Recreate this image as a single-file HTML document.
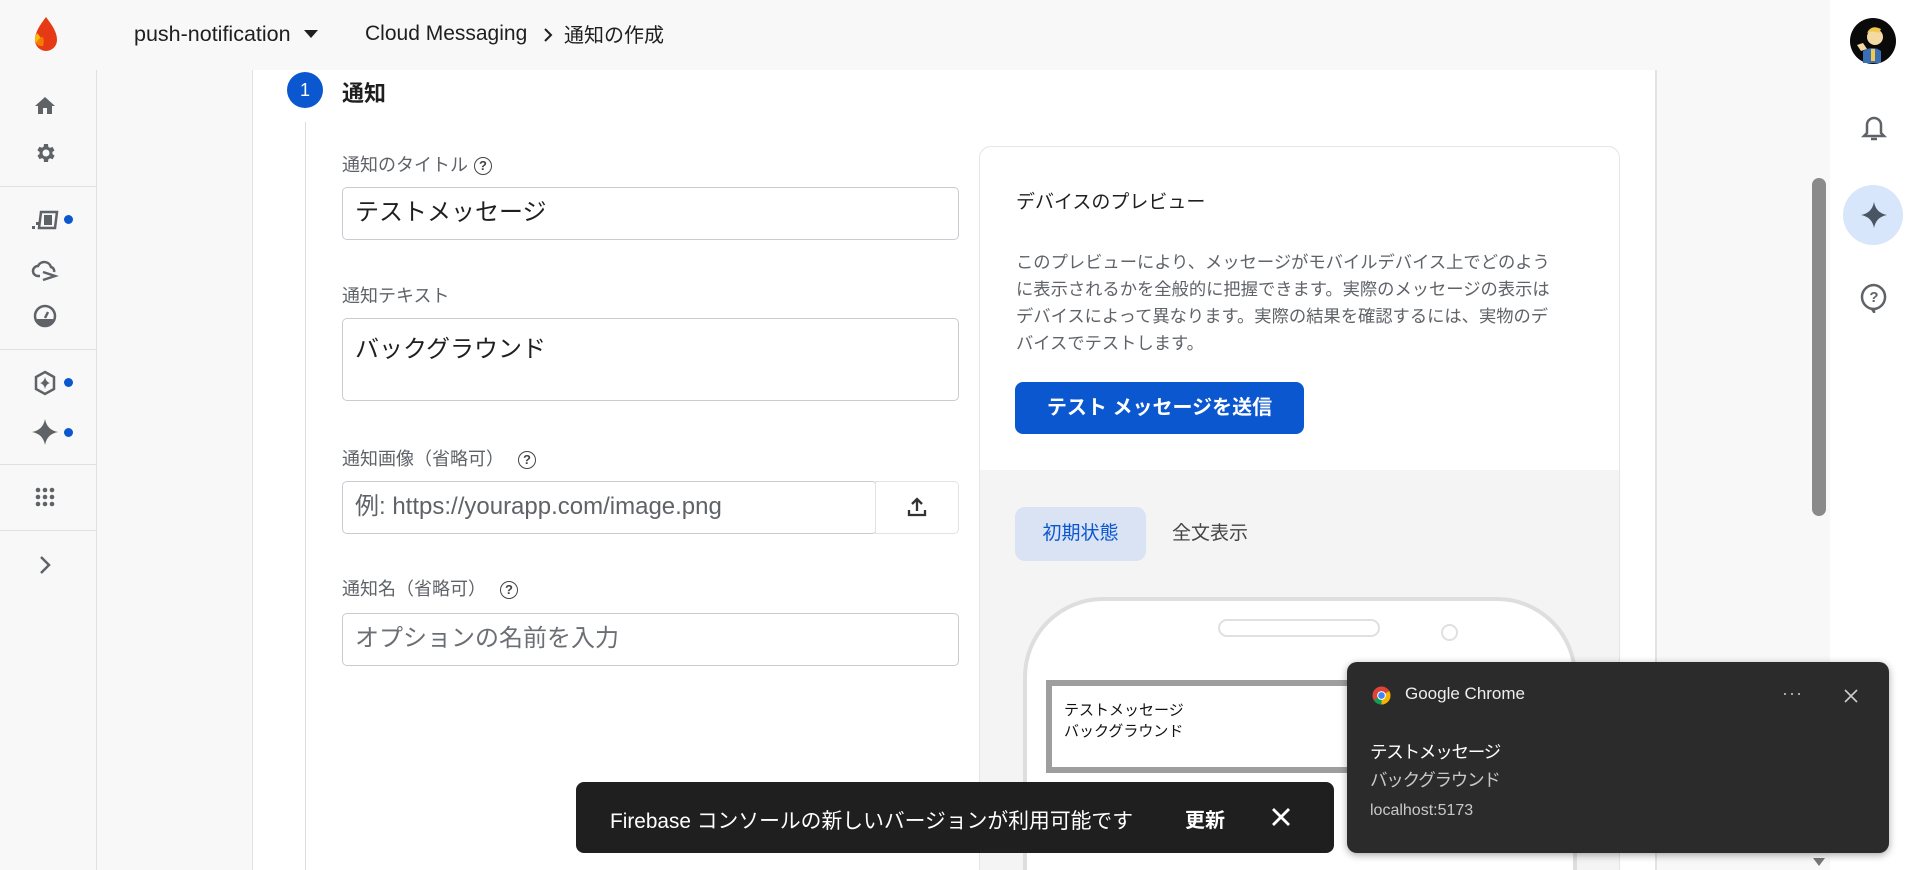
<!DOCTYPE html>
<html><head><meta charset="utf-8"><style>
*{box-sizing:border-box;margin:0;padding:0}
html,body{overflow:hidden}
body{width:1906px;height:870px;background:#f8f8f8;font-family:"Liberation Sans","Noto Sans CJK JP",sans-serif;position:relative;color:#1f1f1f}
.a{position:absolute}
.lbl{position:absolute;left:342px;font-size:18px;color:#5f6368;white-space:nowrap}
.inp{position:absolute;left:342px;width:617px;border:1.5px solid #c8cbd0;border-radius:5px;background:#fff;font-size:24px;padding-left:12px;white-space:nowrap}
.q{display:inline-block;width:18px;height:18px;border:1.8px solid #444;border-radius:50%;font-size:13px;text-align:center;line-height:15px;color:#444;font-weight:bold;vertical-align:1px;margin-left:6px}
.dot{position:absolute;width:9px;height:9px;border-radius:50%;background:#0b57d0}
.hr{position:absolute;left:0;width:97px;height:1px;background:#e0e0e0}
</style></head><body>
<div class="a" style="left:0;top:0;width:1830px;height:70px;background:#f8f8f8"></div>
<svg class="a" style="left:30px;top:15px" width="32" height="40" viewBox="0 0 32 40"><path d="M16 2C22 10 27 17 27 25a11 11 0 0 1-22 0C5 17 10 10 16 2z" fill="#e63a14"/><path d="M7 18c3 3 6 8 6 13a7 7 0 0 1-8-6c0-3 1-5 2-7z" fill="#fbbc04"/><path d="M13 31a7 7 0 0 1-7-3c2-4 5-6 7-6c1 3 1 6 0 9z" fill="#f57c00"/></svg>
<div class="a" style="left:134px;top:22px;font-size:21.5px;color:#1f1f1f">push-notification</div>
<svg class="a" style="left:304px;top:30px" width="14" height="8"><path d="M0 0h14L7 8z" fill="#1f1f1f"/></svg>
<div class="a" style="left:365px;top:22px;font-size:21px">Cloud Messaging</div>
<svg class="a" style="left:543px;top:27px" width="10" height="16"><path d="M2 2l6 6-6 6" fill="none" stroke="#1f1f1f" stroke-width="2"/></svg>
<div class="a" style="left:564px;top:19px;font-size:20px">通知の作成</div>
<div class="a" style="left:96px;top:70px;width:1px;height:800px;background:#e0e0e0"></div>
<div class="hr" style="top:186px"></div><div class="hr" style="top:349px"></div><div class="hr" style="top:464px"></div><div class="hr" style="top:530px"></div>
<svg class="a" style="left:33px;top:94px" width="24" height="24" viewBox="0 0 24 24"><path d="M10 20v-6h4v6h5v-8h3L12 3 2 12h3v8z" fill="#5f6368"/></svg>
<svg class="a" style="left:33px;top:141px" width="24" height="24" viewBox="0 0 24 24"><path d="M19.4 13a7.5 7.5 0 0 0 0-2l2.1-1.6-2-3.5-2.5 1a7 7 0 0 0-1.7-1L15 3h-4l-.4 2.7a7 7 0 0 0-1.7 1l-2.5-1-2 3.5L6.6 11a7.5 7.5 0 0 0 0 2l-2.1 1.6 2 3.5 2.5-1a7 7 0 0 0 1.7 1L11 21h4l.4-2.7a7 7 0 0 0 1.7-1l2.5 1 2-3.5zM13 15.5a3.5 3.5 0 1 1 0-7 3.5 3.5 0 0 1 0 7z" fill="#5f6368"/></svg>
<svg class="a" style="left:30px;top:208px" width="30" height="24" viewBox="0 0 30 24"><rect x="2" y="18" width="3" height="3" fill="#5f6368"/><rect x="6" y="14" width="4" height="3" fill="#5f6368"/><path d="M11 4h16l-2 16H9z" fill="none" stroke="#5f6368" stroke-width="2.5"/><rect x="14" y="7" width="8" height="10" fill="#5f6368"/></svg><div class="dot" style="left:64px;top:215px"></div>
<svg class="a" style="left:31px;top:257px" width="28" height="26" viewBox="0 0 28 26"><path d="M9 19H7a5 5 0 0 1 0-10 7 7 0 0 1 13 1 4 4 0 0 1 3 5M12 15l12 4-12 4" fill="none" stroke="#5f6368" stroke-width="2.5"/></svg>
<svg class="a" style="left:33px;top:304px" width="24" height="24" viewBox="0 0 24 24"><circle cx="12" cy="12" r="10" fill="none" stroke="#5f6368" stroke-width="2.5"/><path d="M4 15h16a8 8 0 0 1-16 0z" fill="#5f6368"/><path d="M12 14l3-6" stroke="#5f6368" stroke-width="2.5"/></svg>
<svg class="a" style="left:33px;top:370px" width="24" height="26" viewBox="0 0 24 26"><path d="M12 2l9 5v12l-9 5-9-5V7z" fill="none" stroke="#5f6368" stroke-width="2.5"/><path d="M12 7q1 5 5 6q-4 1-5 6q-1-5-5-6q4-1 5-6z" fill="#5f6368"/></svg><div class="dot" style="left:64px;top:378px"></div>
<svg class="a" style="left:31px;top:418px" width="28" height="28" viewBox="0 0 28 28"><path d="M14 1q2 11 13 13q-11 2-13 13q-2-11-13-13q11-2 13-13z" fill="#5f6368"/></svg><div class="dot" style="left:64px;top:428px"></div>
<svg class="a" style="left:35px;top:487px" width="20" height="20"><g fill="#5f6368"><circle cx="3" cy="3" r="2.3"/><circle cx="10" cy="3" r="2.3"/><circle cx="17" cy="3" r="2.3"/><circle cx="3" cy="10" r="2.3"/><circle cx="10" cy="10" r="2.3"/><circle cx="17" cy="10" r="2.3"/><circle cx="3" cy="17" r="2.3"/><circle cx="10" cy="17" r="2.3"/><circle cx="17" cy="17" r="2.3"/></g></svg>
<svg class="a" style="left:38px;top:555px" width="14" height="20"><path d="M3 2l8 8-8 8" fill="none" stroke="#5f6368" stroke-width="2.5"/></svg>
<div class="a" style="left:252px;top:70px;width:1405px;height:800px;background:#fff;border-left:1px solid #e3e3e3;border-right:2px solid #e3e3e3"></div>
<div class="a" style="left:287px;top:72px;width:36px;height:36px;border-radius:50%;background:#0b57d0;color:#fff;text-align:center;line-height:36px;font-size:18px">1</div>
<div class="a" style="left:342px;top:76px;font-size:22px;font-weight:bold;color:#1f1f1f">通知</div>
<div class="a" style="left:305px;top:122px;width:1px;height:748px;background:#dadce0"></div>
<div class="lbl" style="top:151px">通知のタイトル<span class="q">?</span></div>
<div class="inp" style="top:187px;height:53px;line-height:50px;color:#1f1f1f">テストメッセージ</div>
<div class="lbl" style="top:282px">通知テキスト</div>
<div class="inp" style="top:318px;height:83px;padding-top:10px;color:#1f1f1f">バックグラウンド</div>
<div class="lbl" style="top:445px">通知画像（省略可）<span class="q" style="margin-left:14px">?</span></div>
<div class="inp" style="top:481px;height:53px;width:535px;line-height:50px;color:#5f6368">例: https://yourapp.com/image.png</div>
<div class="a" style="left:875px;top:481px;width:84px;height:53px;border:1.5px solid #e3e3e3;border-radius:0 5px 5px 0;background:#fff"></div>
<svg class="a" style="left:905px;top:495px" width="24" height="24" viewBox="0 0 24 24"><path d="M12 16V4M7 9l5-5 5 5M4 15v5h16v-5" fill="none" stroke="#333" stroke-width="2.3"/></svg>
<div class="lbl" style="top:575px">通知名（省略可）<span class="q" style="margin-left:14px">?</span></div>
<div class="inp" style="top:613px;height:53px;line-height:50px;color:#6b6f74">オプションの名前を入力</div>
<div class="a" style="left:979px;top:146px;width:641px;height:724px;border:1.5px solid #e3e5ea;border-bottom:none;border-radius:12px 12px 0 0;background:#fff;overflow:hidden">
 <div class="a" style="left:36px;top:40px;font-size:19px;color:#1f1f1f">デバイスのプレビュー</div>
 <div class="a" style="left:36px;top:102px;font-size:17.3px;line-height:27px;color:#5f6368;white-space:nowrap">このプレビューにより、メッセージがモバイルデバイス上でどのよう<br>に表示されるかを全般的に把握できます。実際のメッセージの表示は<br>デバイスによって異なります。実際の結果を確認するには、実物のデ<br>バイスでテストします。</div>
 <div class="a" style="left:35px;top:235px;width:289px;height:52px;border-radius:8px;background:#0b57d0;color:#fff;font-size:20px;font-weight:bold;text-align:center;line-height:52px">テスト メッセージを送信</div>
 <div class="a" style="left:0;top:323px;width:641px;height:401px;background:#f4f4f4;overflow:hidden">
  <div class="a" style="left:35px;top:37px;width:131px;height:54px;border-radius:10px;background:#d9e3f3;color:#0b57d0;font-size:19px;text-align:center;line-height:54px">初期状態</div>
  <div class="a" style="left:192px;top:37px;font-size:19px;color:#444;line-height:54px">全文表示</div>
  <div class="a" style="left:43px;top:127px;width:554px;height:400px;border:4px solid #dedede;border-radius:80px 80px 0 0;background:#fff"></div>
  <div class="a" style="left:238px;top:149px;width:162px;height:18px;border:2px solid #e0e0e0;border-radius:9px"></div>
  <div class="a" style="left:461px;top:154px;width:17px;height:17px;border:2px solid #e0e0e0;border-radius:50%"></div>
  <div class="a" style="left:66px;top:210px;width:560px;height:93px;border:6px solid #9e9e9e;background:#fff;padding:14px 12px;font-size:15px;line-height:21px;color:#111">テストメッセージ<br>バックグラウンド</div>
 </div>
</div>
<div class="a" style="left:1830px;top:0;width:76px;height:870px;background:#fff"></div>
<div class="a" style="left:1812px;top:178px;width:14px;height:338px;border-radius:7px;background:#8a8a8a"></div>
<svg class="a" style="left:1813px;top:858px" width="12" height="8"><path d="M0 0h12L6 8z" fill="#777"/></svg>
<svg class="a" style="left:1849px;top:17px" width="48" height="48" viewBox="0 0 48 48"><circle cx="24" cy="24" r="23" fill="#0a0a0a"/><path d="M14 46v-12q10-6 18 0v12z" fill="#3a6fb5"/><rect x="22" y="32" width="4" height="12" fill="#f0c94c"/><circle cx="26" cy="20" r="8" fill="#f3d9a3"/><path d="M18 16q4-9 14-4l-2 4q-6-3-12 0z" fill="#f0c94c"/><path d="M8 28l6-2 4 6-6 2z" fill="#f3d9a3"/></svg>
<svg class="a" style="left:1861px;top:115px" width="26" height="28" viewBox="0 0 26 28"><path d="M13 3a7 7 0 0 1 7 7v8l3 3H3l3-3v-8a7 7 0 0 1 7-7z" fill="none" stroke="#5f6368" stroke-width="2.5"/><path d="M10 24h6" stroke="#5f6368" stroke-width="2.5"/></svg>
<div class="a" style="left:1843px;top:185px;width:60px;height:60px;border-radius:50%;background:#d7e6fb"></div>
<svg class="a" style="left:1860px;top:201px" width="28" height="28" viewBox="0 0 28 28"><path d="M14 1q2 11 13 13q-11 2-13 13q-2-11-13-13q11-2 13-13z" fill="#4a5563"/></svg>
<svg class="a" style="left:1860px;top:283px" width="28" height="30" viewBox="0 0 28 30"><path d="M14 2a12 12 0 1 1-2 24l2 3v-3" fill="none" stroke="#5f6368" stroke-width="2.5"/><path d="M14 26A12 12 0 0 1 14 2" fill="none" stroke="#5f6368" stroke-width="2.5"/><text x="14" y="19" font-size="15" font-weight="bold" text-anchor="middle" fill="#5f6368" font-family="Liberation Sans">?</text></svg>
<div class="a" style="left:576px;top:782px;width:758px;height:71px;border-radius:8px;background:#1f1f1f"></div>
<div class="a" style="left:610px;top:804px;font-size:20.8px;color:#fff;white-space:nowrap">Firebase コンソールの新しいバージョンが利用可能です</div>
<div class="a" style="left:1185px;top:804px;font-size:20px;color:#fff;font-weight:bold">更新</div>
<svg class="a" style="left:1271px;top:807px" width="20" height="20"><path d="M2 2l16 16M18 2L2 18" stroke="#fff" stroke-width="2.8"/></svg>
<div class="a" style="left:1347px;top:662px;width:542px;height:191px;border-radius:10px;background:#2b2b2b;box-shadow:0 2px 8px rgba(0,0,0,.35)"></div>
<svg class="a" style="left:1372px;top:686px" width="19" height="19" viewBox="0 0 20 20"><circle cx="10" cy="10" r="9.5" fill="#db4437"/><path d="M10 10v9.5a9.5 9.5 0 0 0 8.2-14.2z" fill="#f4b400"/><path d="M10 10L1.8 14.8A9.5 9.5 0 0 0 10 19.5z" fill="#0f9d58"/><circle cx="10" cy="10" r="4.6" fill="#fff"/><circle cx="10" cy="10" r="3.5" fill="#4285f4"/></svg>
<div class="a" style="left:1405px;top:684px;font-size:17px;color:#eee">Google Chrome</div>
<div class="a" style="left:1782px;top:683px;font-size:18px;color:#bbb;letter-spacing:1px">···</div>
<svg class="a" style="left:1844px;top:689px" width="14" height="14"><path d="M1 1l12 12M13 1L1 13" stroke="#ccc" stroke-width="1.6"/></svg>
<div class="a" style="left:1370px;top:739px;font-size:17.5px;letter-spacing:-1.2px;color:#fff">テストメッセージ</div>
<div class="a" style="left:1370px;top:767px;font-size:17.5px;letter-spacing:-1.2px;color:#c8c8c8">バックグラウンド</div>
<div class="a" style="left:1370px;top:802px;font-size:16px;color:#c8c8c8">localhost:5173</div>
</body></html>
